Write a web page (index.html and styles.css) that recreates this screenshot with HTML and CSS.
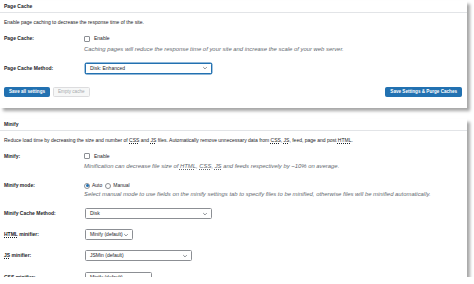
FILE: index.html
```html
<!doctype html>
<html lang="en">
  <head>
    <meta charset="UTF-8" />
    <meta name="viewport" content="width=device-width, initial-scale=1.0" />
    <title>Performance settings</title>
    <link rel="stylesheet" href="styles.css">
  </head>
  <body>
    <div class="page">
      <section class="panel">
        <h2 class="panel-title">Page Cache</h2>
        <div class="panel-body">
          <p class="intro">Enable page caching to decrease the response time of the site.</p>

          <div class="row row-top">
            <div class="label">Page Cache:</div>
            <div class="field">
              <label class="check"><span class="box"></span>Enable</label>
              <p class="hint">Caching pages will reduce the response time of your site and increase the scale of your web server.</p>
            </div>
          </div>

          <div class="row row-select">
            <div class="label">Page Cache Method:</div>
            <div class="field">
              <div class="select select-wide is-focus">
                <span>Disk: Enhanced</span>
                <svg class="chev" viewBox="0 0 10 6"><path d="M2 1.5l3 3 3-3" /></svg>
              </div>
            </div>
          </div>

          <div class="actions">
            <button class="btn btn-primary">Save all settings</button>
            <button class="btn btn-disabled">Empty cache</button>
            <button class="btn btn-primary btn-right">Save Settings &amp; Purge Caches</button>
          </div>
        </div>
      </section>

      <section class="panel panel-cut">
        <h2 class="panel-title">Minify</h2>
        <div class="panel-body">
          <p class="intro">Reduce load time by decreasing the size and number of <abbr>CSS</abbr> and <abbr>JS</abbr> files. Automatically remove unnecessary data from <abbr>CSS</abbr>, <abbr>JS</abbr>, feed, page and post <abbr>HTML</abbr>.</p>

          <div class="row row-top">
            <div class="label">Minify:</div>
            <div class="field">
              <label class="check"><span class="box"></span>Enable</label>
              <p class="hint">Minification can decrease file size of <abbr>HTML</abbr>, <abbr>CSS</abbr>, <abbr>JS</abbr> and feeds respectively by ~10% on average.</p>
            </div>
          </div>

          <div class="row row-top row-mode">
            <div class="label">Minify mode:</div>
            <div class="field">
              <div class="radios">
                <label class="check"><span class="radio is-on"></span>Auto</label>
                <label class="check"><span class="radio"></span>Manual</label>
              </div>
              <p class="hint">Select manual mode to use fields on the minify settings tab to specify files to be minified, otherwise files will be minified automatically.</p>
            </div>
          </div>

          <div class="row row-select">
            <div class="label">Minify Cache Method:</div>
            <div class="field">
              <div class="select select-wide">
                <span>Disk</span>
                <svg class="chev" viewBox="0 0 10 6"><path d="M2 1.5l3 3 3-3" /></svg>
              </div>
            </div>
          </div>

          <div class="row row-select">
            <div class="label"><abbr>HTML</abbr> minifier:</div>
            <div class="field">
              <div class="select select-small">
                <span>Minify (default)</span>
                <svg class="chev" viewBox="0 0 10 6"><path d="M2 1.5l3 3 3-3" /></svg>
              </div>
            </div>
          </div>

          <div class="row row-select">
            <div class="label"><abbr>JS</abbr> minifier:</div>
            <div class="field">
              <div class="select select-mid">
                <span>JSMin (default)</span>
                <svg class="chev" viewBox="0 0 10 6"><path d="M2 1.5l3 3 3-3" /></svg>
              </div>
            </div>
          </div>

          <div class="row row-select row-last">
            <div class="label"><abbr>CSS</abbr> minifier:</div>
            <div class="field">
              <div class="select select-css">
                <span>Minify (default)</span>
                <svg class="chev" viewBox="0 0 10 6"><path d="M2 1.5l3 3 3-3" /></svg>
              </div>
            </div>
          </div>
        </div>
      </section>
    </div>
  </body>
</html>
```

FILE: styles.css
```css
* {
  margin: 0;
  padding: 0;
  box-sizing: border-box;
}

body {
  font-family: "Liberation Sans", Arial, sans-serif;
  background: #ffffff;
  color: #1d2327;
  font-size: 5px;
  line-height: 7px;
}

.page {
  padding-top: 1px;
  width: 467px;
  display: flex;
  flex-direction: column;
  gap: 11px;
}

.panel {
  background: #ffffff;
  box-shadow: 3px 3px 3px rgba(0, 0, 0, 0.35);
}

.panel-cut {
  height: 158px;
  overflow: hidden;
}

.panel-title {
  font-size: 5px;
  font-weight: 700;
  line-height: 10px;
  height: 12px;
  padding: 0 4px 2px;
  border-bottom: 1px solid #e2e4e7;
}

.panel-body {
  padding: 0 5px 11px 4px;
}

.intro {
  margin-top: 6px;
}

abbr {
  text-decoration: underline dotted;
  text-underline-offset: 1px;
}

.row {
  display: flex;
  margin-top: 10px;
}

.row-top {
  align-items: flex-start;
  margin-top: 9px;
}

.row-mode {
  margin-top: 12px;
}

.row-select {
  align-items: center;
}

.row-last {
  margin-top: 11px;
}

.label {
  width: 80px;
  flex: none;
  font-weight: 700;
}

.field {
  flex: 1;
}

.check {
  display: inline-flex;
  align-items: center;
  gap: 4px;
}

.box {
  width: 6px;
  height: 6px;
  border: 0.6px solid #8c8f94;
  border-radius: 1px;
  background: #fff;
}

.radios {
  display: flex;
  gap: 3px;
}

.check .radio {
  width: 6px;
  height: 6px;
  border: 0.6px solid #8c8f94;
  border-radius: 50%;
  background: #fff;
  margin-right: -2px;
  display: flex;
  align-items: center;
  justify-content: center;
}

.radio.is-on::after {
  content: "";
  width: 3px;
  height: 3px;
  border-radius: 50%;
  background: #2271b1;
}

.hint {
  margin-top: 2px;
  font-size: 5.9px;
  font-style: italic;
  color: #646970;
}

.select {
  height: 11px;
  margin-left: 1px;
  border: 0.6px solid #8c8f94;
  border-radius: 1.5px;
  background: #fff;
  display: flex;
  align-items: center;
  justify-content: space-between;
  padding: 0 3px 0 4px;
}

.select.is-focus {
  border: 0.8px solid #2271b1;
  box-shadow: 0 0 0 0.4px #2271b1;
}

.select-wide {
  width: 127px;
}

.select-small {
  width: 48px;
}

.select-mid {
  width: 107px;
}

.select-css {
  width: 67px;
}

.chev {
  width: 6px;
  height: 4px;
  fill: none;
  stroke: #50575e;
  stroke-width: 1.1;
}

.actions {
  display: flex;
  gap: 3px;
  margin-top: 13px;
}

.btn {
  font-family: inherit;
  font-size: 4.6px;
  height: 10px;
  padding: 0 4px;
  border-radius: 1.5px;
  border: 0.6px solid;
}

.btn-primary {
  background: #2271b1;
  border-color: #2271b1;
  color: #ffffff;
  font-weight: 700;
}

.btn-disabled {
  background: #f6f7f7;
  border-color: #dcdcde;
  color: #a7aaad;
}

.btn-right {
  margin-left: auto;
}
```
